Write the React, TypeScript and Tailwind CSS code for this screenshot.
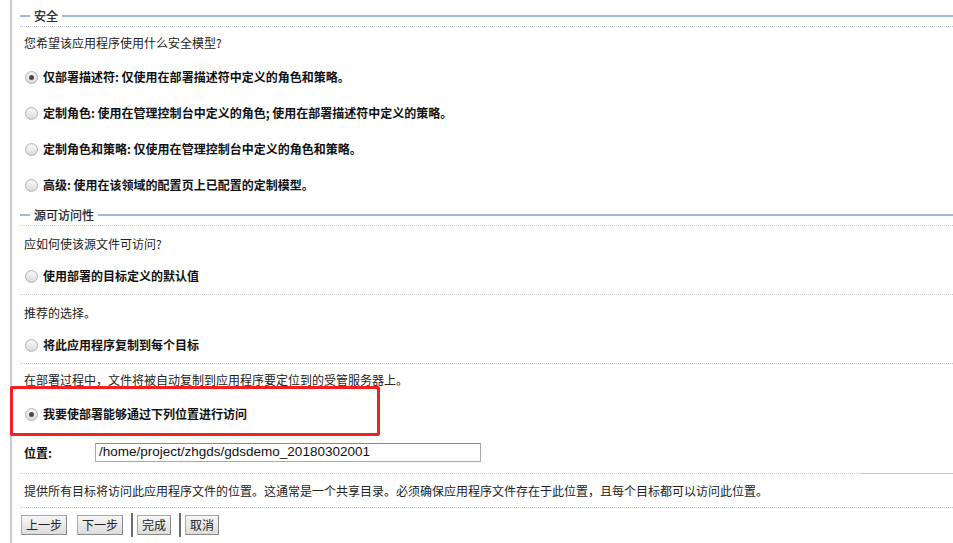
import React from "react";

const font = "font-['Noto_Sans_CJK_SC','Liberation_Sans',sans-serif]";

function Radio({ checked }: { checked?: boolean }) {
  return (
    <span className="w-[13px] h-[13px] rounded-full border border-[#b4b4b4] bg-gradient-to-b from-[#fdfdfd] to-[#d9d9d9] flex items-center justify-center shrink-0 shadow-[inset_0_1px_1px_rgba(0,0,0,0.08)]">
      {checked && <span className="w-[5px] h-[5px] rounded-full bg-[#4a4a4a]" />}
    </span>
  );
}

function SectionHeader({ title, top }: { title: string; top: string }) {
  return (
    <div className={`${top} border-b border-dotted border-[#c4c4c4]`}>
      <div className="h-[21px] flex items-center">
        <div className="w-[10px] h-[2px] bg-[#a0b9d6]" />
        <span className="px-[4px] text-[12px] text-[#1a1a1a] leading-none [-webkit-text-stroke:0.25px_#1a1a1a]">{title}</span>
        <div className="flex-1 h-[2px] bg-[#a0b9d6]" />
      </div>
    </div>
  );
}

function RadioRow({ label, checked, className }: { label: string; checked?: boolean; className: string }) {
  return (
    <div className={`flex items-center gap-[5px] pl-[5px] ${className}`}>
      <Radio checked={checked} />
      <span className="text-[12px] font-bold text-[#111] leading-none">{label}</span>
    </div>
  );
}

function Btn({ children }: { children: React.ReactNode }) {
  return (
    <button className="h-[20px] px-[4px] text-[12px] leading-none text-[#222] border border-[#a8a8a8] border-b-[#8a8a8a] border-r-[#8a8a8a] bg-gradient-to-b from-[#f6f6f6] to-[#dcdcdc]">
      {children}
    </button>
  );
}

export default function App() {
  return (
    <div className={`w-[953px] h-[543px] bg-white overflow-hidden relative pl-[10px] ${font}`}>
      <div className="h-full border-l-2 border-[#cbcbcb] pl-[8px]">
        {/* 安全 */}
        <SectionHeader title="安全" top="pt-[5px]" />
        <div className="h-[32px] flex items-center pl-[4px] text-[12px] text-[#222]">
          您希望该应用程序使用什么安全模型?
        </div>
        <RadioRow checked className="h-[36px]" label="仅部署描述符: 仅使用在部署描述符中定义的角色和策略。" />
        <RadioRow className="h-[36px]" label="定制角色: 使用在管理控制台中定义的角色; 使用在部署描述符中定义的策略。" />
        <RadioRow className="h-[36px]" label="定制角色和策略: 仅使用在管理控制台中定义的角色和策略。" />
        <RadioRow className="h-[36px]" label="高级: 使用在该领域的配置页上已配置的定制模型。" />

        {/* 源可访问性 */}
        <SectionHeader title="源可访问性" top="pt-[1px]" />
        <div className="h-[36px] flex items-center pl-[4px] text-[12px] text-[#222]">
          应如何使该源文件可访问?
        </div>
        <RadioRow className="h-[33px] pb-[4px] border-b border-dotted border-[#c4c4c4]" label="使用部署的目标定义的默认值" />
        <div className="h-[36px] flex items-center pl-[4px] text-[12px] text-[#222]">推荐的选择。</div>
        <RadioRow className="h-[33px] pb-[4px] border-b border-dotted border-[#c4c4c4]" label="将此应用程序复制到每个目标" />
        <div className="h-[32px] flex items-center pl-[4px] text-[12px] text-[#222]">
          在部署过程中，文件将被自动复制到应用程序要定位到的受管服务器上。
        </div>
        <RadioRow checked className="h-[36px]" label="我要使部署能够通过下列位置进行访问" />

        <div className="h-[41px] flex items-center pl-[4px]">
          <span className="w-[71px] text-[12px] font-bold text-[#111]">位置:</span>
          <div className="w-[386px] h-[19px] border border-[#a9a9a9] border-t-[#8c8c8c] flex items-center px-[3px] text-[13.5px] text-[#111] font-['Liberation_Sans',sans-serif]">
            /home/project/zhgds/gdsdemo_20180302001
          </div>
        </div>
        <div className="flex">
          <div className="flex-1 border-b border-dotted border-[#c4c4c4]" />
          <div className="w-[92px] border-b border-[#c8c8c8]" />
        </div>
        <div className="h-[34px] flex items-center pl-[4px] text-[12px] text-[#222] border-b border-dotted border-[#c4c4c4]">
          提供所有目标将访问此应用程序文件的位置。这通常是一个共享目录。必须确保应用程序文件存在于此位置，且每个目标都可以访问此位置。
        </div>

        <div className="flex items-center pt-[5px] pl-[1px]">
          <Btn>上一步</Btn>
          <div className="w-[10px]" />
          <Btn>下一步</Btn>
          <div className="w-[2px] h-[24px] bg-[#6a6a6a] mx-[4px] ml-[8px]" />
          <Btn>完成</Btn>
          <div className="w-[2px] h-[24px] bg-[#6a6a6a] mx-[4px] ml-[8px]" />
          <Btn>取消</Btn>
        </div>
      </div>

      {/* 红色标注框 */}
      <div className="absolute left-[10px] top-[386px] w-[370px] h-[50px] border-[3px] border-[#f42020] rounded-[2px] pointer-events-none" />
    </div>
  );
}
